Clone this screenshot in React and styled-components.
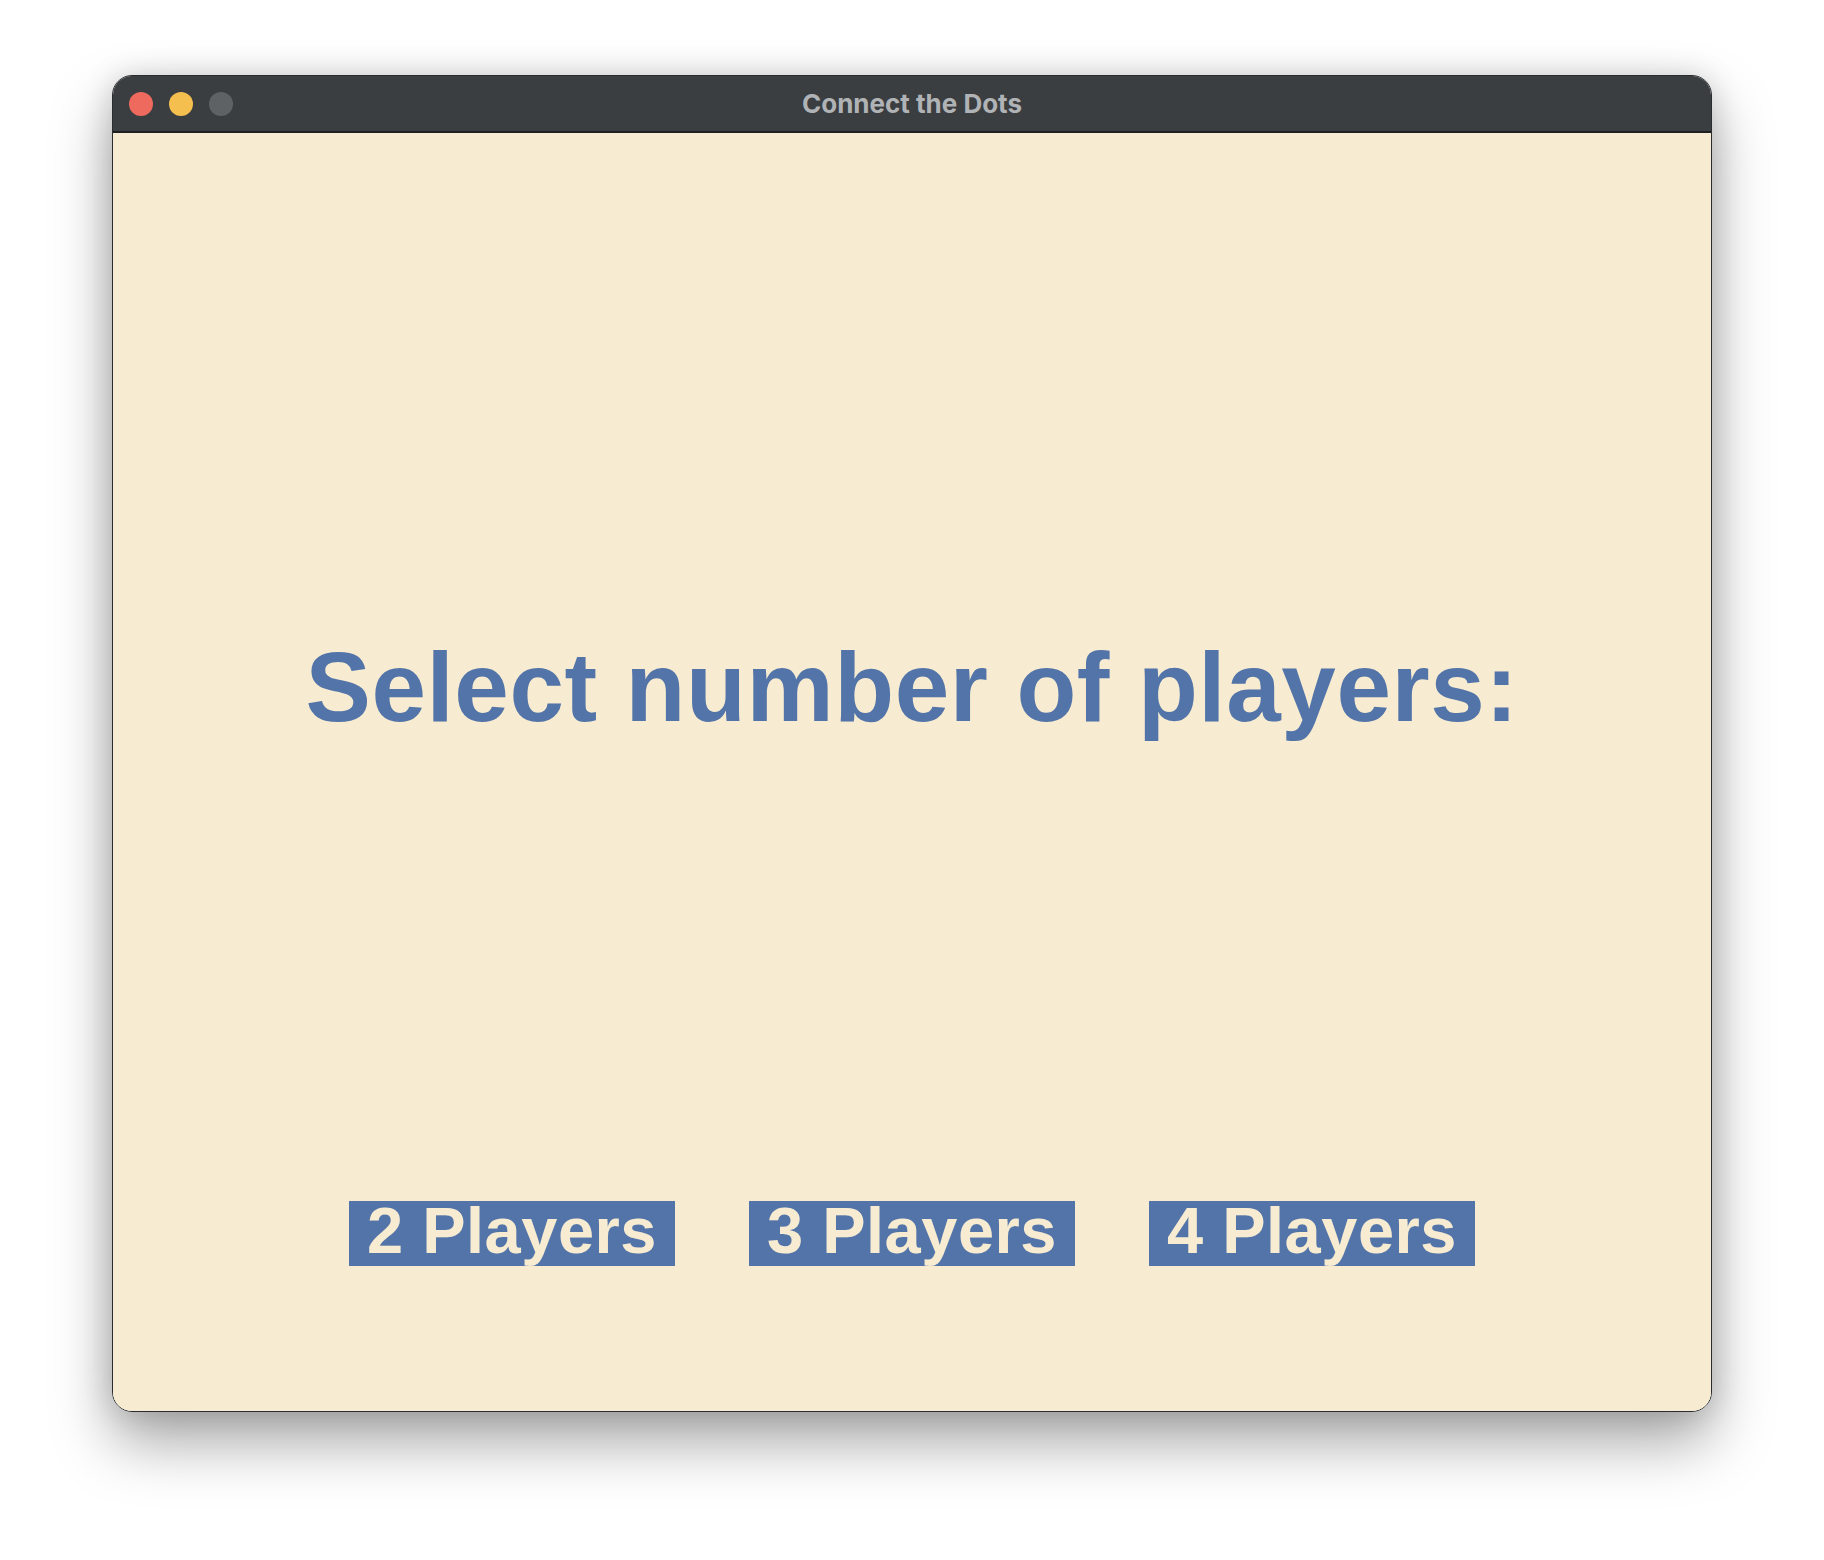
import React from "react";
import styled, { createGlobalStyle } from "styled-components";

const Global = createGlobalStyle`
  html, body { margin: 0; padding: 0; background: #ffffff; }
  body { font-family: "Liberation Sans", Arial, sans-serif; }
`;

const Stage = styled.div`
  width: 1824px;
  height: 1560px;
  padding: 75px 0 0 112px;
  box-sizing: border-box;
`;

const Window = styled.div`
  width: 1600px;
  height: 1337px;
  border-radius: 20px;
  overflow: hidden;
  display: flex;
  flex-direction: column;
  border: 1px solid #2a2c2e;
  box-sizing: border-box;
  box-shadow: 0 30px 60px rgba(0,0,0,0.35), 0 0 30px rgba(0,0,0,0.15);
`;

const TitleBar = styled.div`
  height: 57px;
  flex: none;
  background: #3b3e41;
  border-bottom: 2px solid #1e1f21;
  box-sizing: border-box;
  position: relative;
  display: flex;
  align-items: center;
  justify-content: center;
`;

const Lights = styled.div`
  position: absolute;
  left: 16px;
  top: 16px;
  display: flex;
  gap: 16px;
`;

const Light = styled.span`
  width: 24px;
  height: 24px;
  border-radius: 50%;
  background: ${(p) => p.$c};
`;

const Title = styled.div`
  color: #b0b3b6;
  font-family: "Inter", "Liberation Sans", sans-serif;
  font-weight: 700;
  font-size: 26px;
  margin-top: -1px;
`;

const Content = styled.div`
  flex: 1;
  background: #f7ebd1;
  display: flex;
  flex-direction: column;
  align-items: center;
  padding-top: 505px;
`;

const Heading = styled.h1`
  margin: 0;
  font-size: 98px;
  line-height: 98px;
  font-weight: 700;
  letter-spacing: 0.6px;
  color: #5274a8;
`;

const Buttons = styled.div`
  display: flex;
  gap: 74px;
  margin-top: 465px;
`;

const Button = styled.button`
  width: 326px;
  height: 65px;
  border: none;
  background: #5274a8;
  color: #f7ebd1;
  font-family: "Liberation Sans", Arial, sans-serif;
  font-weight: 700;
  font-size: 65px;
  line-height: 59px;
  letter-spacing: 0.5px;
  padding: 0 0 6px;
  text-align: center;
  cursor: pointer;
`;

export default function App() {
  return (
    <>
      <Global />
      <Stage>
        <Window>
          <TitleBar>
            <Lights>
              <Light $c="#ee6a5e" />
              <Light $c="#f5bf4f" />
              <Light $c="#5f6265" />
            </Lights>
            <Title>Connect the Dots</Title>
          </TitleBar>
          <Content>
            <Heading>Select number of players:</Heading>
            <Buttons>
              <Button>2 Players</Button>
              <Button>3 Players</Button>
              <Button>4 Players</Button>
            </Buttons>
          </Content>
        </Window>
      </Stage>
    </>
  );
}
